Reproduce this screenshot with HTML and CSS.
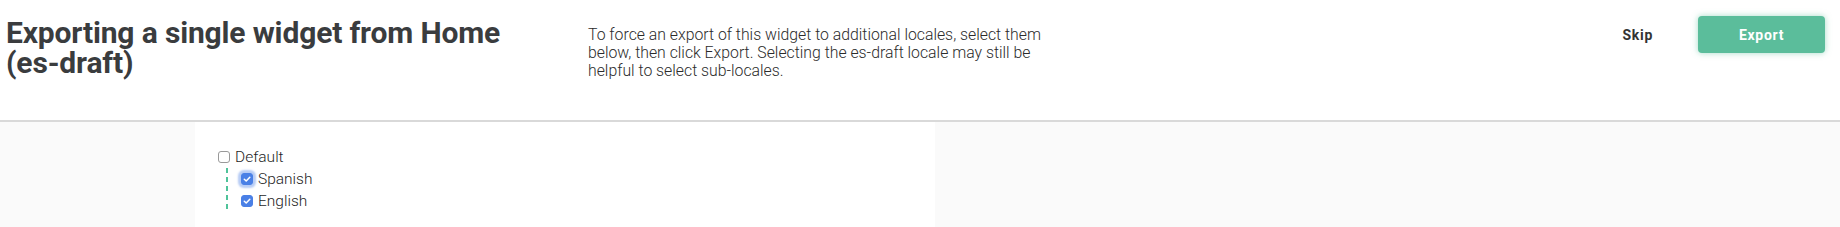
FILE: index.html
```html
<!DOCTYPE html>
<html lang="en">
<head>
    <meta charset="UTF-8">
    <title>Export widget</title>
    <link rel="stylesheet" href="styles.css">
</head>
<body>
    <header class="export-head">
        <h1 class="title">Exporting a single widget from Home (es-draft)</h1>
        <p class="intro">To force an export of this widget to additional locales, select them below, then click Export. Selecting the es-draft locale may still be helpful to select sub-locales.</p>
        <div class="actions">
            <button class="skip-btn">Skip</button>
            <button class="export-btn">Export</button>
        </div>
    </header>

    <main class="export-body">
        <section class="panel">
            <ul class="locales">
                <li>
                    <label class="locale"><span class="box"></span>Default</label>
                    <ul class="sub-locales">
                        <li>
                            <label class="locale"><span class="box checked focused"><svg viewBox="0 0 10 10"><path d="M2.3 5.2 L4.2 7 L7.8 3.2" /></svg></span>Spanish</label>
                        </li>
                        <li>
                            <label class="locale"><span class="box checked"><svg viewBox="0 0 10 10"><path d="M2.3 5.2 L4.2 7 L7.8 3.2" /></svg></span>English</label>
                        </li>
                    </ul>
                </li>
            </ul>
        </section>
    </main>
</body>
</html>
```

FILE: styles.css
```css
body {
    margin: 0;
    font-family: Roboto, "Liberation Sans", sans-serif;
    background-color: #fafafa;
    color: #222;
}

.export-head {
    display: flex;
    align-items: flex-start;
    height: 120px;
    padding: 0 15px 0 6px;
    background-color: #fff;
    border-bottom: 2px solid #d9d9d9;
}

.title {
    flex: 0 0 520px;
    margin: 18px 62px 0 0;
    font-size: 30px;
    line-height: 30px;
    font-weight: 700;
    letter-spacing: -0.15px;
    color: #3a3c3e;
}

.intro {
    width: 484px;
    margin: 26px 0 0 0;
    font-size: 15.8px;
    line-height: 18px;
    font-weight: 300;
    color: #2b2b2b;
}

.actions {
    margin: 16px 0 0 auto;
    display: flex;
    align-items: center;
}

.actions button {
    font-family: inherit;
    font-size: 14px;
    font-weight: 700;
    letter-spacing: 0.7px;
    border: none;
    cursor: pointer;
}

.skip-btn {
    background: none;
    color: #333;
    padding: 0 20px;
    margin-right: 25px;
}

.export-btn {
    width: 127px;
    height: 37px;
    border-radius: 4px;
    background-color: #5bbd9b;
    color: #fff;
    box-shadow: 0 0 6px rgba(91, 189, 155, 0.55);
}

.export-body {
    display: flex;
    min-height: 105px;
}

.panel {
    width: 740px;
    margin-left: 195px;
    padding: 24px 23px;
    box-sizing: border-box;
    background-color: #fff;
}

.locales, .sub-locales {
    list-style: none;
    margin: 0;
    padding: 0;
}

.sub-locales {
    margin-left: 8px;
    padding-left: 15px;
    background-image: repeating-linear-gradient(to bottom, #4fc39a 0 5px, transparent 5px 9px);
    background-size: 2px 41px;
    background-repeat: no-repeat;
}

.locale {
    display: flex;
    align-items: center;
    height: 22px;
    font-size: 15.5px;
    font-weight: 300;
    color: #1e1e1e;
}

.box {
    width: 10px;
    height: 10px;
    margin-right: 5px;
    border: 1px solid #999;
    border-radius: 3px;
    background-color: #fff;
    display: flex;
}

.box.checked {
    border-color: #4a80e6;
    background-color: #4a80e6;
}

.box.focused {
    box-shadow: 0 0 2px 3px rgba(74, 128, 230, 0.4);
}

.box svg {
    width: 10px;
    height: 10px;
}

.box path {
    fill: none;
    stroke: #fff;
    stroke-width: 1.5;
    stroke-linecap: round;
    stroke-linejoin: round;
}
```
